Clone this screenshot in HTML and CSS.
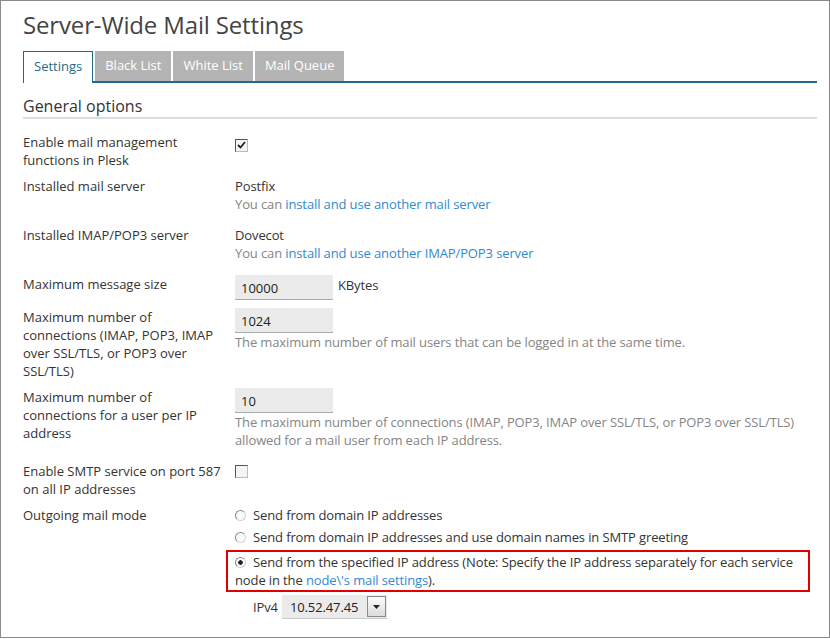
FILE: index.html
```html
<!DOCTYPE html>
<html lang="en">
<head>
    <meta charset="UTF-8">
    <title>Server-Wide Mail Settings</title>
    <link rel="stylesheet" href="styles.css">
</head>
<body>
    <div class="page">
        <h1>Server-Wide Mail Settings</h1>

        <div class="tabs">
            <span class="tab active">Settings</span>
            <span class="tab">Black List</span>
            <span class="tab">White List</span>
            <span class="tab">Mail Queue</span>
        </div>

        <h2>General options</h2>

        <div class="form">
            <div class="row">
                <div class="label">Enable mail management functions in Plesk</div>
                <div class="field">
                    <span class="checkbox checked">
                        <svg width="9" height="8" viewBox="0 0 9 8"><path d="M1 4 L3.5 6.5 L8 1" fill="none" stroke="#222" stroke-width="1.8"/></svg>
                    </span>
                </div>
            </div>

            <div class="row">
                <div class="label">Installed mail server</div>
                <div class="field">
                    <div>Postfix</div>
                    <div class="hint">You can <a href="#">install and use another mail server</a></div>
                </div>
            </div>

            <div class="row">
                <div class="label">Installed IMAP/POP3 server</div>
                <div class="field">
                    <div>Dovecot</div>
                    <div class="hint">You can <a href="#">install and use another IMAP/POP3 server</a></div>
                </div>
            </div>

            <div class="row">
                <div class="label">Maximum message size</div>
                <div class="field inline">
                    <input class="text" type="text" value="10000">
                    <span class="unit">KBytes</span>
                </div>
            </div>

            <div class="row">
                <div class="label">Maximum number of connections (IMAP, POP3, IMAP over SSL/TLS, or POP3 over SSL/TLS)</div>
                <div class="field">
                    <input class="text" type="text" value="1024">
                    <div class="hint">The maximum number of mail users that can be logged in at the same time.</div>
                </div>
            </div>

            <div class="row">
                <div class="label">Maximum number of connections for a user per IP address</div>
                <div class="field">
                    <input class="text" type="text" value="10">
                    <div class="hint">The maximum number of connections (IMAP, POP3, IMAP over SSL/TLS, or POP3 over SSL/TLS) allowed for a mail user from each IP address.</div>
                </div>
            </div>

            <div class="row">
                <div class="label">Enable SMTP service on port 587 on all IP addresses</div>
                <div class="field">
                    <span class="checkbox"></span>
                </div>
            </div>

            <div class="row">
                <div class="label">Outgoing mail mode</div>
                <div class="field">
                    <div class="option"><span class="radio"></span>Send from domain IP addresses</div>
                    <div class="option"><span class="radio"></span>Send from domain IP addresses and use domain names in SMTP greeting</div>
                    <div class="option highlight"><span class="radio checked"></span>Send from the specified IP address (Note: Specify the IP address separately for each service node in the <a href="#">node\'s mail settings</a>).</div>
                    <div class="ip-row">
                        <span class="ip-label">IPv4</span>
                        <div class="select">
                            <span class="select-value">10.52.47.45</span>
                            <span class="select-btn">
                                <svg width="7" height="4" viewBox="0 0 7 4"><path d="M0 0 H7 L3.5 4 Z" fill="#222"/></svg>
                            </span>
                        </div>
                    </div>
                </div>
            </div>
        </div>
    </div>
</body>
</html>
```

FILE: styles.css
```css
:root {
    --text-color: #333333;
    --hint-color: #858585;
    --link-color: #2f8ad0;
    --tab-blue: #1f6a8a;
    --field-bg: #ebebeb;
}

html, body {
    margin: 0;
    padding: 0;
    background: #ffffff;
}

body {
    font-family: 'Open Sans', 'Noto Sans', sans-serif;
    font-size: 13px;
    line-height: 18px;
    color: var(--text-color);
}

.page {
    width: 830px;
    height: 638px;
    box-sizing: border-box;
    border: 1px solid #8a8a8a;
    padding: 8px 12px 0 22px;
    overflow: hidden;
}

h1 {
    margin: 0;
    font-size: 24px;
    line-height: 32px;
    font-weight: normal;
    color: #444444;
    letter-spacing: -0.15px;
}

/* Tabs */
.tabs {
    display: flex;
    gap: 2px;
    margin-top: 10px;
    border-bottom: 2px solid var(--tab-blue);
}

.tab {
    height: 30px;
    line-height: 29px;
    padding: 0 10px;
    background: #b4b4b4;
    color: #ffffff;
    box-sizing: border-box;
}

.tab.active {
    background: #ffffff;
    color: var(--tab-blue);
    border: 1px solid var(--tab-blue);
    border-bottom: none;
    margin-bottom: -2px;
    height: 32px;
    padding: 0 10px;
}

h2 {
    margin: 12px 0 0;
    font-size: 16px;
    line-height: 22px;
    font-weight: normal;
    color: #333333;
    border-bottom: 2px solid #dddddd;
}

/* Form rows */
.form {
    margin-top: 14px;
    display: flex;
    flex-direction: column;
    gap: 8px;
}

.row {
    display: grid;
    grid-template-columns: 212px 1fr;
}

.label {
    padding-right: 10px;
}

.field {
    letter-spacing: -0.12px;
}

.field.inline {
    display: flex;
    align-items: flex-start;
}

.hint {
    color: var(--hint-color);
    margin-bottom: 5px;
}

a {
    color: var(--link-color);
    text-decoration: none;
}

input.text {
    display: block;
    width: 98px;
    height: 25px;
    box-sizing: border-box;
    border: none;
    border-bottom: 1px solid #a8a8a8;
    background: var(--field-bg);
    padding: 2px 6px 0;
    font-family: inherit;
    font-size: 13px;
    color: #222222;
}

.unit {
    margin-left: 5px;
    line-height: 18px;
    margin-top: 1px;
}

/* Checkbox */
.checkbox {
    display: inline-flex;
    align-items: center;
    justify-content: center;
    width: 13px;
    height: 13px;
    box-sizing: border-box;
    border: 1px solid #555555;
    border-right-color: #bbbbbb;
    border-bottom-color: #bbbbbb;
    background: #f4f4f4;
    vertical-align: -2px;
    margin-top: 3px;
}

/* Radio options */
.option {
    margin-bottom: 4px;
}

.radio {
    display: inline-block;
    width: 11px;
    height: 11px;
    box-sizing: border-box;
    border-radius: 50%;
    border: 1px solid #8a8a8a;
    border-bottom-color: #d4d4d4;
    border-right-color: #d4d4d4;
    background: #fafafa;
    margin-right: 7px;
    vertical-align: -1px;
}

.radio.checked {
    background: radial-gradient(circle, #222222 0, #222222 2px, #fafafa 2.5px);
}

.option.highlight {
    margin-left: -9px;
    margin-right: 7px;
    margin-bottom: 3px;
    padding: 1px 7px 1px;
    border: 2px solid #e00000;
}

/* IPv4 select */
.ip-row {
    display: flex;
    align-items: center;
    gap: 4px;
    margin-left: 18px;
}

.select {
    display: flex;
    align-items: stretch;
    width: 105px;
    height: 24px;
    background: var(--field-bg);
    border-bottom: 1px solid #c8c8c8;
    box-sizing: border-box;
}

.select-value {
    flex: 1;
    padding-left: 8px;
    line-height: 24px;
    color: #222222;
}

.select-btn {
    width: 19px;
    margin: 1px 1px 1px 0;
    display: flex;
    align-items: center;
    justify-content: center;
    background: linear-gradient(#fbfbfb, #dcdcdc);
    border: 1px solid #8a8a8a;
    box-sizing: border-box;
}
```
